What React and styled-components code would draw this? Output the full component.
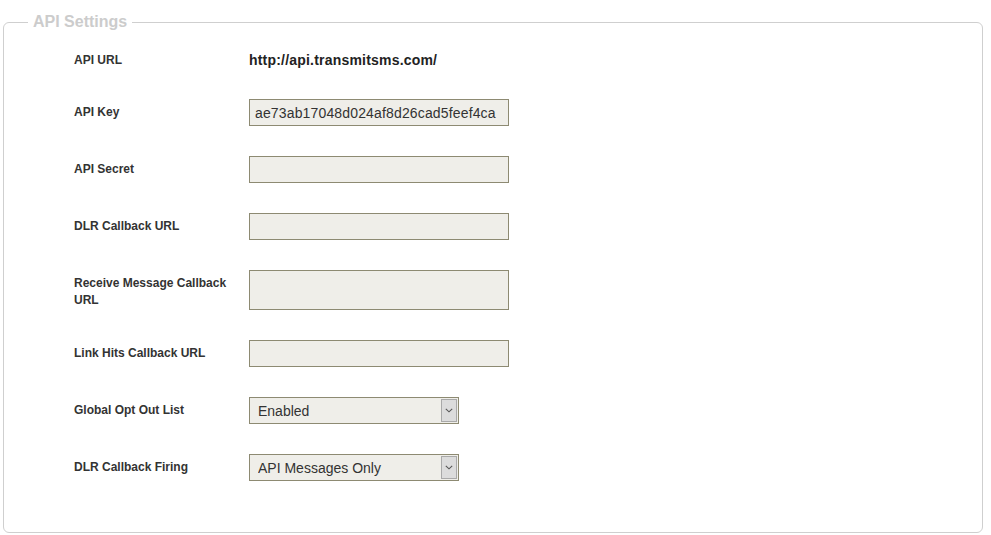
import React, { useState } from "react";
import styled, { createGlobalStyle } from "styled-components";

const GlobalStyle = createGlobalStyle`
  html, body {
    margin: 0;
    padding: 0;
    background: #ffffff;
    font-family: "Liberation Sans", Arial, sans-serif;
  }
`;

const rows = [
  { label: "API Secret", value: "" },
  { label: "DLR Callback URL", value: "" },
  { label: "Receive Message Callback URL", value: "", tall: true },
  { label: "Link Hits Callback URL", value: "" },
];

const App = () => {
  const [apiKey, setApiKey] = useState("ae73ab17048d024af8d26cad5feef4ca");
  const [values, setValues] = useState(rows.map((row) => row.value));
  const [optOut, setOptOut] = useState("Enabled");
  const [firing, setFiring] = useState("API Messages Only");

  const updateValue = (index, text) => {
    const next = [...values];
    next[index] = text;
    setValues(next);
  };

  return (
    <Page>
      <GlobalStyle />
      <Fieldset>
        <Legend>API Settings</Legend>
        <FormGrid>
          <Label>API URL</Label>
          <UrlValue>http://api.transmitsms.com/</UrlValue>

          <Label $offset>API Key</Label>
          <TextInput
            type="text"
            value={apiKey}
            onChange={(event) => setApiKey(event.target.value)}
          />

          {rows.map((row, index) => (
            <React.Fragment key={row.label}>
              <Label $offset>{row.label}</Label>
              {row.tall ? (
                <TextArea
                  value={values[index]}
                  onChange={(event) => updateValue(index, event.target.value)}
                />
              ) : (
                <TextInput
                  type="text"
                  value={values[index]}
                  onChange={(event) => updateValue(index, event.target.value)}
                />
              )}
            </React.Fragment>
          ))}

          <Label $offset>Global Opt Out List</Label>
          <SelectBox>
            <NativeSelect
              value={optOut}
              onChange={(event) => setOptOut(event.target.value)}
            >
              <option>Enabled</option>
              <option>Disabled</option>
            </NativeSelect>
            <ArrowButton>
              <Chevron />
            </ArrowButton>
          </SelectBox>

          <Label $offset>DLR Callback Firing</Label>
          <SelectBox>
            <NativeSelect
              value={firing}
              onChange={(event) => setFiring(event.target.value)}
            >
              <option>API Messages Only</option>
              <option>All Messages</option>
            </NativeSelect>
            <ArrowButton>
              <Chevron />
            </ArrowButton>
          </SelectBox>
        </FormGrid>
      </Fieldset>
    </Page>
  );
};

const Chevron = () => (
  <svg width="8" height="5" viewBox="0 0 8 5">
    <path d="M0.8 0.8 L4 3.8 L7.2 0.8" fill="none" stroke="#555" strokeWidth="1.1" />
  </svg>
);

export default App;

const Page = styled.div`
  width: 991px;
  height: 535px;
  box-sizing: border-box;
  padding: 13px 8px 0 3px;
`;

const Fieldset = styled.fieldset`
  margin: 0;
  padding: 19px 0 51px 0;
  border: 1px solid #cfcfcf;
  border-radius: 6px;
  min-width: 0;
`;

const Legend = styled.legend`
  margin-left: 24px;
  padding: 0 5px;
  font-size: 16px;
  line-height: 18px;
  font-weight: bold;
  color: #cccccc;
`;

const FormGrid = styled.div`
  display: grid;
  grid-template-columns: 175px 1fr;
  row-gap: 30px;
  align-items: start;
  padding-left: 70px;
`;

const Label = styled.div`
  font-size: 12px;
  line-height: 17px;
  font-weight: bold;
  color: #333333;
  padding-right: 12px;
  padding-top: ${(props) => (props.$offset ? "5px" : "2px")};
`;

const UrlValue = styled.div`
  font-size: 14px;
  line-height: 18px;
  padding-top: 1px;
  font-weight: bold;
  letter-spacing: 0.2px;
  color: #222222;
`;

const TextInput = styled.input`
  box-sizing: border-box;
  width: 260px;
  height: 27px;
  margin: 0;
  padding: 0 5px;
  border: 1px solid #8d8a72;
  background: #efeee9;
  font-family: "Liberation Sans", Arial, sans-serif;
  font-size: 14px;
  letter-spacing: 0.15px;
  color: #333333;
  outline: none;
`;

const TextArea = styled.textarea`
  box-sizing: border-box;
  width: 260px;
  height: 40px;
  margin: 0;
  padding: 4px 5px;
  border: 1px solid #8d8a72;
  background: #efeee9;
  font-family: "Liberation Sans", Arial, sans-serif;
  font-size: 14px;
  color: #333333;
  resize: none;
  outline: none;
  display: block;
`;

const SelectBox = styled.div`
  box-sizing: border-box;
  width: 210px;
  height: 27px;
  display: flex;
  align-items: stretch;
  border: 1px solid #8d8a72;
  background: #efeee9;
`;

const NativeSelect = styled.select`
  flex: 1;
  min-width: 0;
  appearance: none;
  -webkit-appearance: none;
  border: none;
  background: transparent;
  margin: 0;
  padding: 0 0 0 8px;
  font-family: "Liberation Sans", Arial, sans-serif;
  font-size: 14px;
  color: #333333;
  outline: none;
`;

const ArrowButton = styled.span`
  box-sizing: border-box;
  width: 16px;
  margin: 1px;
  display: flex;
  align-items: center;
  justify-content: center;
  background: #dcdcdc;
  border: 1px solid #a9a9a9;
`;
